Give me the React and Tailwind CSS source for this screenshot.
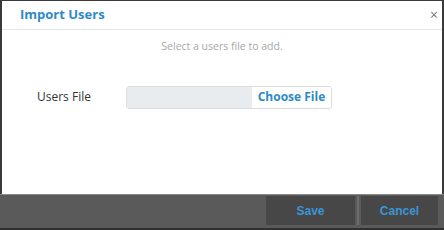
import React from "react";

export default function App() {
  return (
    <div
      className="w-[444px] h-[230px] bg-[#3a3a3a] pt-[1px] px-[2px] overflow-hidden"
      style={{ fontFamily: '"Open Sans", "Liberation Sans", sans-serif' }}
    >
      <div className="h-[229px] bg-white flex flex-col">
        {/* Header */}
        <div className="h-[29px] flex items-center justify-between pl-[18px] pr-[4px] border-b border-[#e5e5e5]">
          <h1 className="text-[13px] font-bold text-[#2d8ac7]">Import Users</h1>
          <span className="text-[14px] text-[#777] leading-none">×</span>
        </div>

        {/* Body */}
        <div className="flex-1 flex flex-col">
          <p className="text-center text-[10.5px] text-[#a8a8a8] mt-[9px]">
            Select a users file to add.
          </p>
          <div className="flex items-center mt-[31px]">
            <span className="w-[124px] pl-[35px] text-[12px] text-[#333] whitespace-nowrap">
              Users File
            </span>
            <div className="flex h-[23px] w-[206px] rounded-[3px] border border-[#dcdcdc] overflow-hidden">
              <div className="flex-1 bg-[#e9ecef]"></div>
              <div className="w-[79px] bg-white flex items-center justify-center text-[12px] font-bold text-[#2d8ac7]">
                Choose File
              </div>
            </div>
          </div>
        </div>

        {/* Footer */}
        <div className="h-[36px] -mx-[2px] bg-[#5a5a5a] border-t border-[#8a8a8a] flex justify-end items-stretch pr-[6px] pt-[1px] pb-[3px] border-b-2 border-b-[#303030]">
          <button className="w-[89px] bg-[#474747] text-[12px] font-bold text-[#3b95d6]" style={{ fontFamily: '"Liberation Sans", Arial, sans-serif' }}>
            Save
          </button>
          <div className="w-[6px] flex justify-center">
            <div className="w-[2px] bg-[#6e6e6e]"></div>
          </div>
          <button className="w-[77px] bg-[#474747] text-[12px] font-bold text-[#3b95d6]" style={{ fontFamily: '"Liberation Sans", Arial, sans-serif' }}>
            Cancel
          </button>
        </div>
      </div>
    </div>
  );
}
